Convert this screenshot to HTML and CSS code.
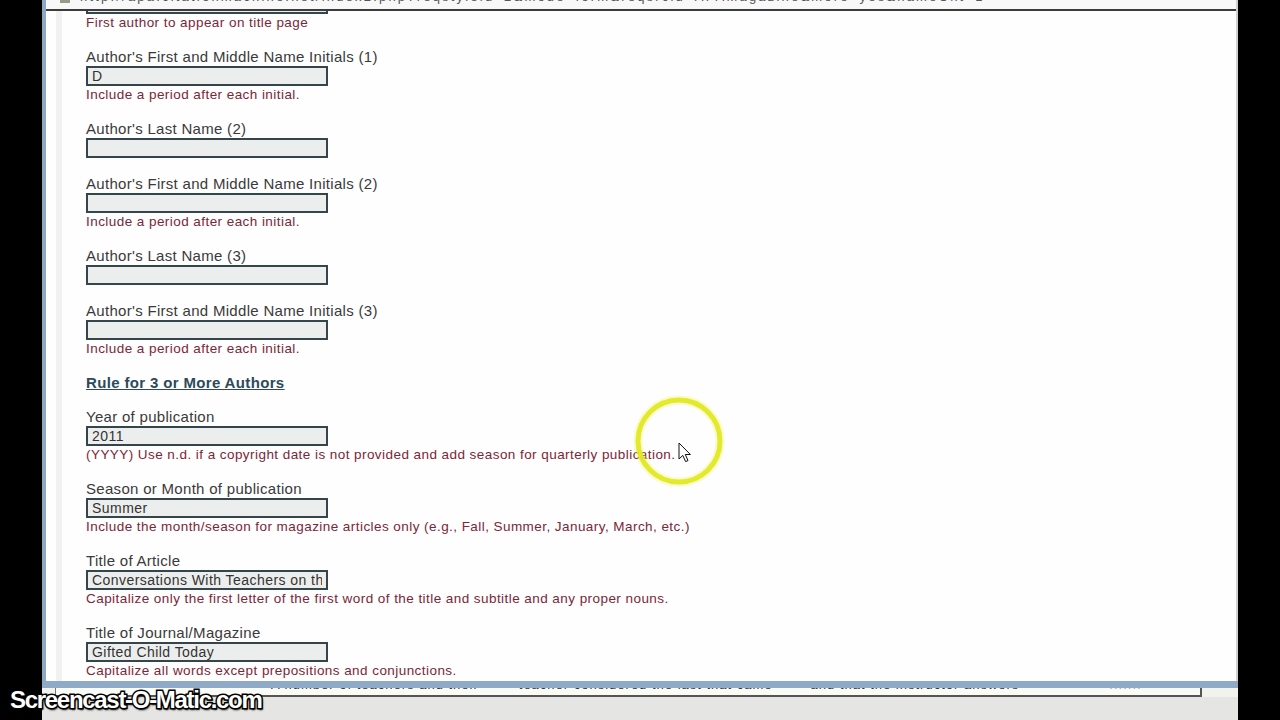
FILE: index.html
```html
<!DOCTYPE html>
<html lang="en">
<head>
<meta charset="utf-8">
<title>Citation form</title>
<link rel="stylesheet" href="styles.css">
</head>
<body>
<div class="screen">
  <div class="side"></div>
  <div class="window">
    <div class="frame">
      <div class="topbar">
        <span class="tb-icon"></span>
        <span class="tb-url">http://apa.citationmachine.net/index2.php?reqstyleid=2&amp;mode=form&amp;reqsrcid=APAMagazine&amp;more=yes&amp;nameCnt=1</span>
      </div>
      <div class="panel">
        <div class="form">
          <div class="field">
            <input class="input" type="text" value="">
            <div class="hint">First author to appear on title page</div>
          </div>
          <div class="field">
            <div class="label">Author's First and Middle Name Initials (1)</div>
            <input class="input" type="text" value="D">
            <div class="hint">Include a period after each initial.</div>
          </div>
          <div class="field">
            <div class="label">Author's Last Name (2)</div>
            <input class="input" type="text" value="">
          </div>
          <div class="field">
            <div class="label">Author's First and Middle Name Initials (2)</div>
            <input class="input" type="text" value="">
            <div class="hint">Include a period after each initial.</div>
          </div>
          <div class="field">
            <div class="label">Author's Last Name (3)</div>
            <input class="input" type="text" value="">
          </div>
          <div class="field">
            <div class="label">Author's First and Middle Name Initials (3)</div>
            <input class="input" type="text" value="">
            <div class="hint">Include a period after each initial.</div>
          </div>
          <a class="rule-link" href="#">Rule for 3 or More Authors</a>
          <div class="field">
            <div class="label">Year of publication</div>
            <input class="input" type="text" value="2011">
            <div class="hint">(YYYY) Use n.d. if a copyright date is not provided and add season for quarterly publication.</div>
          </div>
          <div class="field">
            <div class="label">Season or Month of publication</div>
            <input class="input" type="text" value="Summer">
            <div class="hint">Include the month/season for magazine articles only (e.g., Fall, Summer, January, March, etc.)</div>
          </div>
          <div class="field">
            <div class="label">Title of Article</div>
            <input class="input" type="text" value="Conversations With Teachers on the Use of Technology">
            <div class="hint">Capitalize only the first letter of the first word of the title and subtitle and any proper nouns.</div>
          </div>
          <div class="field">
            <div class="label">Title of Journal/Magazine</div>
            <input class="input" type="text" value="Gifted Child Today">
            <div class="hint">Capitalize all words except prepositions and conjunctions.</div>
          </div>
        </div>
      </div>
    </div>
    <div class="bluebar"></div>
    <div class="under">
      <div class="under-box">
        <span class="ut ut1">A number of teachers and their</span>
        <span class="ut ut2">teacher considered the last that came</span>
        <span class="ut ut3">and that the instructor answers</span>
        <span class="ut ut4">.......</span>
      </div>
    </div>
    <div class="graybottom"></div>
  </div>
  <div class="side"></div>
</div>

<svg class="highlight" width="100" height="100" viewBox="0 0 100 100" aria-hidden="true">
  <circle cx="50" cy="50" r="41" fill="none" stroke="#f1f56a" stroke-width="9" opacity="0.35"/>
  <circle cx="50" cy="50" r="41" fill="none" stroke="#e2e820" stroke-width="5" opacity="0.92"/>
</svg>
<svg class="cursor" width="14" height="22" viewBox="0 0 14 22" aria-hidden="true">
  <path d="M1 1 L1 17 L4.8 13.4 L7.6 19.6 L10 18.6 L7.3 12.5 L12.4 12.5 Z" fill="#fff" stroke="#111" stroke-width="1" stroke-linejoin="round"/>
</svg>
<div class="watermark">Screencast-O-Matic.com</div>
</body>
</html>
```

FILE: styles.css
```css
html, body {
  margin: 0;
  padding: 0;
}
body {
  width: 1280px;
  height: 720px;
  overflow: hidden;
  background: #000;
  font-family: "Liberation Sans", Arial, sans-serif;
  position: relative;
}
.screen {
  display: flex;
  width: 1280px;
  height: 720px;
}
.side {
  width: 42px;
  flex: 0 0 42px;
  background: #000;
}
.window {
  flex: 1;
  display: flex;
  flex-direction: column;
  background: #e6e6e4;
}
.frame {
  height: 681px;
  display: flex;
  flex-direction: column;
  border-left: 4px solid #8fa8c2;
  border-right: 2px solid #d0d0d0;
  background: #fefefe;
}
.topbar {
  height: 9px;
  border-bottom: 2px solid #3c3c3c;
  background: #f8f8f8;
  overflow: hidden;
  display: flex;
  align-items: flex-start;
  gap: 10px;
  padding-left: 14px;
}
.tb-icon {
  width: 10px;
  height: 3px;
  background: #9a9a86;
  flex: 0 0 10px;
}
.tb-url {
  font-size: 13px;
  line-height: 13px;
  margin-top: -10px;
  color: #555;
  white-space: nowrap;
  letter-spacing: 2.2px;
}
.panel {
  flex: 1;
  overflow: hidden;
  padding-left: 40px;
  background: linear-gradient(to right, #fefefe 0, #fefefe 10px, #f1f1f1 10px, #f1f1f1 16px, #fefefe 16px);
}
.form {
  margin-top: -17px;
  display: flex;
  flex-direction: column;
  align-items: flex-start;
}
.field {
  display: flex;
  flex-direction: column;
  align-items: flex-start;
  margin-bottom: 16px;
}
.label {
  font-size: 15px;
  line-height: 19px;
  color: #3a3a3a;
  letter-spacing: 0.3px;
}
.input {
  box-sizing: border-box;
  width: 242px;
  height: 20px;
  margin: 0;
  border: 2px solid #34454b;
  background: #eceeed;
  padding: 0 4px;
  font-family: "Liberation Sans", Arial, sans-serif;
  font-size: 14px;
  color: #333;
  letter-spacing: 0.45px;
  outline: none;
}
.hint {
  font-size: 13.5px;
  line-height: 17px;
  color: #7c2638;
  letter-spacing: 0.44px;
  white-space: nowrap;
}
.rule-link {
  font-size: 15px;
  line-height: 19px;
  font-weight: bold;
  color: #2c4a5c;
  letter-spacing: 0.35px;
  text-decoration: underline;
  margin-bottom: 15px;
}
.bluebar {
  height: 7px;
  background: #8eaac6;
}
.under {
  height: 9px;
  background: #f3f3ee;
  padding-left: 13px;
  padding-right: 36px;
}
.under-box {
  height: 7px;
  border-left: 1px solid #777;
  border-right: 2px solid #555;
  border-bottom: 2px solid #555;
  overflow: hidden;
  display: flex;
  background: #fbfbf6;
}
.ut {
  font-size: 13px;
  line-height: 13px;
  margin-top: -10px;
  color: #333;
  white-space: nowrap;
  letter-spacing: 1px;
}
.ut1 { margin-left: 215px; }
.ut2 { margin-left: 40px; }
.ut3 { margin-left: 38px; }
.ut4 { margin-left: 90px; color: #aaa; }
.graybottom {
  flex: 1;
  background: #e5e5e3;
}
.highlight {
  position: absolute;
  left: 629px;
  top: 391px;
  filter: blur(0.7px);
}
.cursor {
  position: absolute;
  left: 678px;
  top: 442px;
}
.watermark {
  position: absolute;
  left: 10px;
  top: 686px;
  font-family: "Liberation Sans", Arial, sans-serif;
  font-weight: bold;
  font-size: 24px;
  line-height: 28px;
  letter-spacing: -1.3px;
  color: #fff;
  -webkit-text-stroke: 3px #000;
  paint-order: stroke fill;
  text-shadow: 1px 2px 2px #000;
  white-space: nowrap;
}
```
